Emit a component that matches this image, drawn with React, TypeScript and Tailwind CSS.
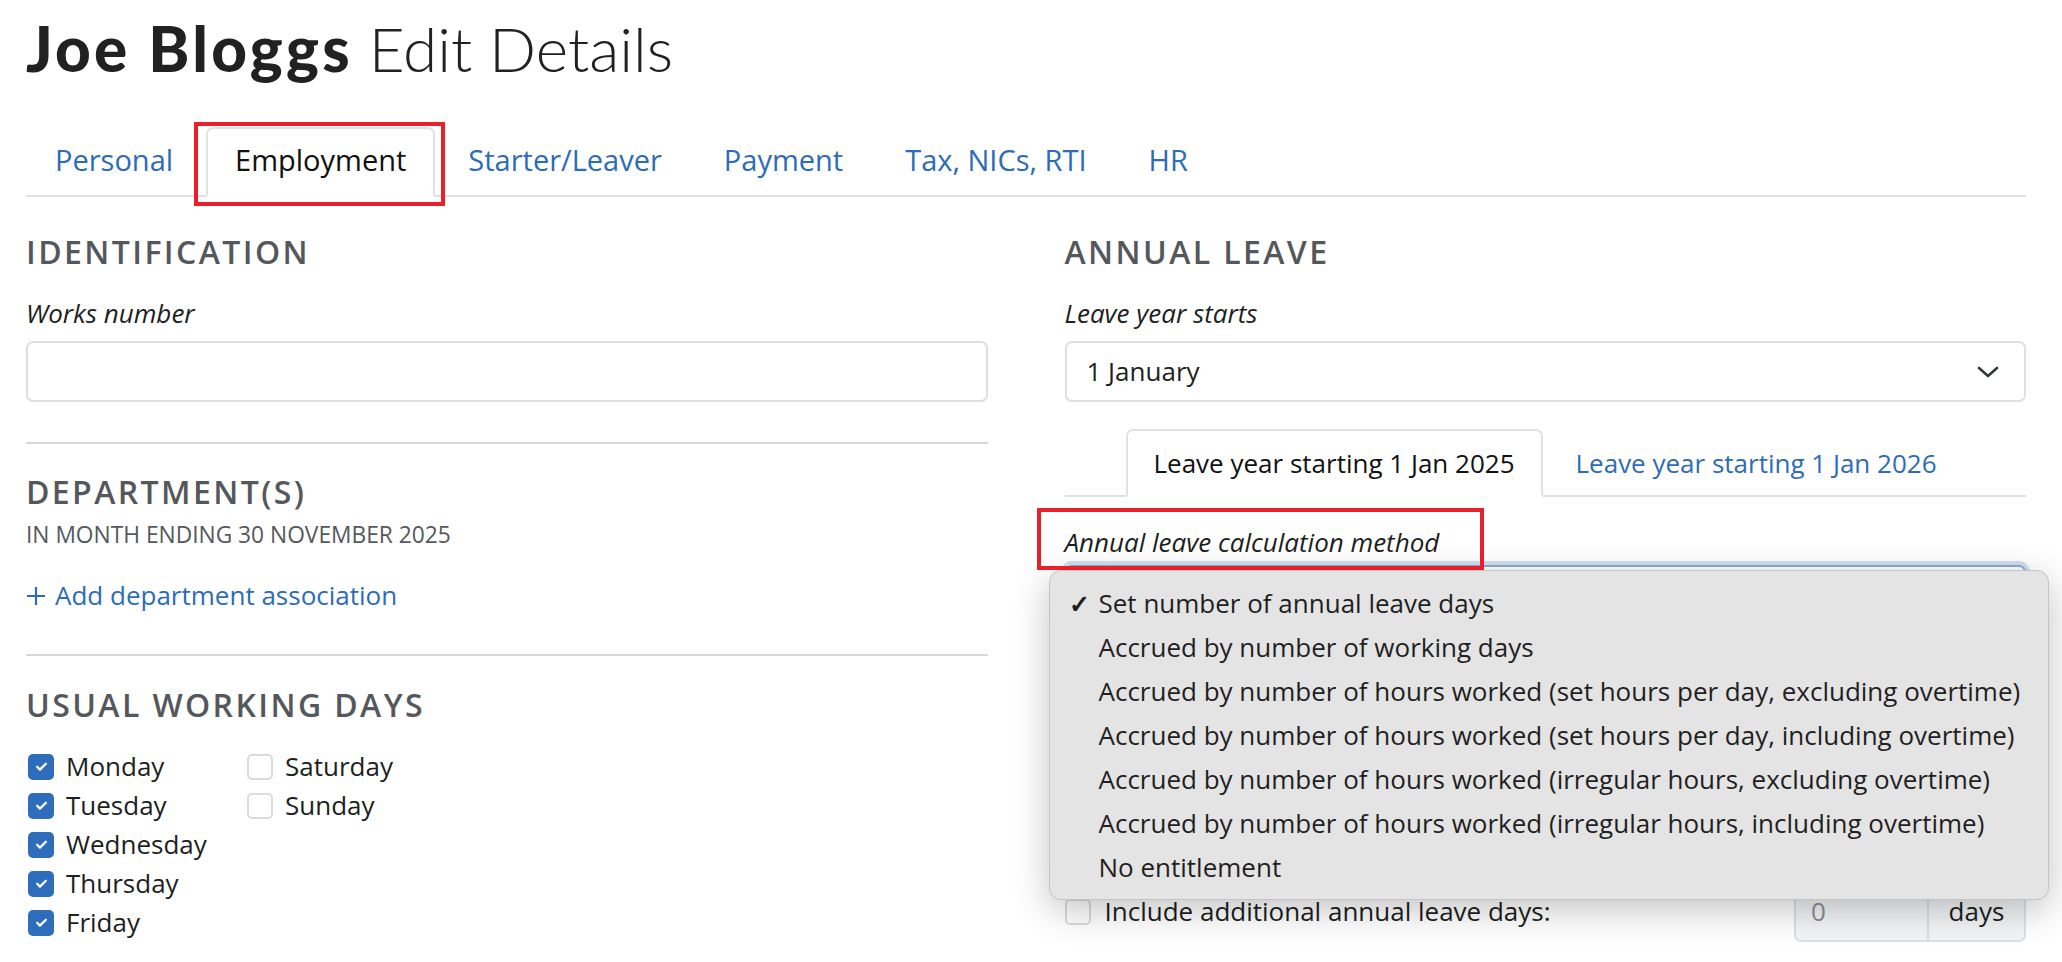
import React from 'react';

const mainTabs = ['Personal', 'Employment', 'Starter/Leaver', 'Payment', 'Tax, NICs, RTI', 'HR'];

const workingDays = [
  { name: 'Monday', on: true },
  { name: 'Tuesday', on: true },
  { name: 'Wednesday', on: true },
  { name: 'Thursday', on: true },
  { name: 'Friday', on: true },
  { name: 'Saturday', on: false },
  { name: 'Sunday', on: false },
];

const methods = [
  'Set number of annual leave days',
  'Accrued by number of working days',
  'Accrued by number of hours worked (set hours per day, excluding overtime)',
  'Accrued by number of hours worked (set hours per day, including overtime)',
  'Accrued by number of hours worked (irregular hours, excluding overtime)',
  'Accrued by number of hours worked (irregular hours, including overtime)',
  'No entitlement',
];

function Checkbox({ on }: { on: boolean }) {
  if (on) {
    return (
      <span className="flex h-[26px] w-[26px] shrink-0 items-center justify-center rounded-[5px] bg-[#2e6dbb]">
        <svg viewBox="0 0 24 24" className="h-[15px] w-[15px]" fill="none" stroke="white" strokeWidth="3.6" strokeLinecap="round" strokeLinejoin="round">
          <path d="M5 12.5l4.5 4.5L19 7.5" />
        </svg>
      </span>
    );
  }
  return <span className="h-[26px] w-[26px] shrink-0 rounded-[5px] border-2 border-[#d9dcdf] bg-white" />;
}

function SectionTitle({ children, className = '' }: { children: React.ReactNode; className?: string }) {
  return (
    <h2 className={'text-[32px] font-semibold uppercase leading-[38px] tracking-[2.4px] text-[#54585c] ' + className}>
      {children}
    </h2>
  );
}

function FieldLabel({ children, className = '' }: { children: React.ReactNode; className?: string }) {
  return <label className={'block text-[26px] italic leading-[39px] text-[#1d1f21] ' + className}>{children}</label>;
}

export default function App() {
  return (
    <div className="min-h-screen w-full bg-white pl-[26px] pr-[36px] font-['Open_Sans',sans-serif] text-[#212529]">
      <h1 className="pt-[11px] font-['Lato',sans-serif] text-[62px] leading-[1.2] text-[#212121]">
        <span className="font-black tracking-[3.2px]">Joe Bloggs</span> <span className="font-light">Edit Details</span>
      </h1>

      {/* main tabs */}
      <div className="mt-[42px] flex border-b-2 border-[#dee2e6]">
        {mainTabs.map((tab) => {
          const active = tab === 'Employment';
          return (
            <div
              key={tab}
              className={
                'relative -mb-[2px] mr-[4px] rounded-t-[7px] border-2 px-[27px] pb-[13px] pt-[9px] text-[29px] leading-[44px] ' +
                (active ? 'border-[#dee2e6] border-b-white text-[#111]' : 'border-transparent text-[#2c6cb8]')
              }
            >
              {tab}
              {active && (
                <span className="pointer-events-none absolute -bottom-[11px] -left-[14px] -right-[12px] -top-[7px] z-30 border-4 border-[#e8202a]" />
              )}
            </div>
          );
        })}
      </div>

      <div className="mt-[36px] grid grid-cols-2 gap-x-[77px]">
        {/* left column */}
        <div>
          <SectionTitle>Identification</SectionTitle>
          <FieldLabel className="mt-[23px]">Works number</FieldLabel>
          <div className="mt-[8px] h-[61px] rounded-[7px] border-2 border-[#dcdfe3] bg-white" />

          <div className="mt-[40px] h-[2px] bg-[#d5d8db]" />

          <SectionTitle className="mt-[29px]">Department(s)</SectionTitle>
          <p className="mt-[7px] text-[22.75px] uppercase leading-[34px] text-[#55595d]">In month ending 30 November 2025</p>
          <a className="mt-[24px] flex items-center gap-[9px] text-[26px] leading-[39px] text-[#2c6cb8]">
            <svg viewBox="0 0 20 20" className="h-[20px] w-[20px]" fill="none" stroke="currentColor" strokeWidth="2.2">
              <path d="M10 1v18M1 10h18" />
            </svg>
            Add department association
          </a>

          <div className="mt-[39px] h-[2px] bg-[#d5d8db]" />

          <SectionTitle className="mt-[30px]">Usual working days</SectionTitle>
          <div className="mt-[23px] grid grid-flow-col grid-cols-[219px_auto] grid-rows-5 justify-start pl-[2px]">
            {workingDays.map((d) => (
              <div key={d.name} className="flex h-[39px] items-center gap-[12px] text-[26px] text-[#1d1f21]">
                <Checkbox on={d.on} />
                <span className="leading-[39px]">{d.name}</span>
              </div>
            ))}
          </div>
        </div>

        {/* right column */}
        <div>
          <SectionTitle>Annual leave</SectionTitle>
          <FieldLabel className="mt-[23px]">Leave year starts</FieldLabel>
          <div className="mt-[8px] flex h-[61px] items-center justify-between rounded-[7px] border-2 border-[#dcdfe3] bg-white pl-[20px] pr-[25px] text-[26px] text-[#1d1f21]">
            <span>1 January</span>
            <svg viewBox="0 0 22 12" className="h-[12px] w-[22px]" fill="none" stroke="#33373b" strokeWidth="2.6" strokeLinecap="round" strokeLinejoin="round">
              <path d="M2 2l9 8 9-8" />
            </svg>
          </div>

          <div className="mt-[27px] flex border-b-2 border-[#dee2e6] pl-[61px]">
            <div className="-mb-[2px] mr-[5px] rounded-t-[7px] border-2 border-[#dee2e6] border-b-white px-[26px] py-[12px] text-[26px] leading-[40px] text-[#111]">
              Leave year starting 1 Jan 2025
            </div>
            <div className="-mb-[2px] border-2 border-transparent px-[26px] py-[12px] text-[26px] leading-[40px] text-[#2c6cb8]">
              Leave year starting 1 Jan 2026
            </div>
          </div>

          <div className="relative mt-[26px]">
            <FieldLabel>Annual leave calculation method</FieldLabel>
            <span className="pointer-events-none absolute -left-[28px] -top-[15px] z-30 h-[62px] w-[447px] border-4 border-[#e8202a]" />
          </div>

          {/* focused select with open native menu */}
          <div className="relative mt-[3px] h-[61px] rounded-[7px] border-2 border-[#8eaad3] bg-white shadow-[0_0_0_4px_rgba(44,108,184,0.22)]">
            <div className="absolute -left-[18px] top-[3px] z-20 w-[1000px] rounded-[12px] border border-[#c4c4c4] bg-[#e4e4e4] py-[10px] text-[26px] text-[#1f1f1f] shadow-[0_10px_36px_rgba(0,0,0,0.24)]">
              {methods.map((m, i) => (
                <div key={m} className="flex h-[44px] items-center pl-[19px]">
                  <span className="w-[30px] text-[25px] font-semibold">{i === 0 ? '✓' : ''}</span>
                  <span>{m}</span>
                </div>
              ))}
            </div>
          </div>

          <div className="mt-[255px] flex h-[61px] items-center justify-between">
            <div className="flex items-center gap-[14px] text-[26px] text-[#1d1f21]">
              <Checkbox on={false} />
              <span>Include additional annual leave days:</span>
            </div>
            <div className="flex h-[61px] w-[232px] overflow-hidden rounded-[7px] border-2 border-[#dcdfe3] bg-[#f3f4f6] text-[26px]">
              <div className="flex flex-1 items-center pl-[15px] text-[#8a8f94]">0</div>
              <div className="flex w-[97px] items-center justify-center border-l-2 border-[#dcdfe3] text-[#1d1f21]">days</div>
            </div>
          </div>
        </div>
      </div>
    </div>
  );
}
